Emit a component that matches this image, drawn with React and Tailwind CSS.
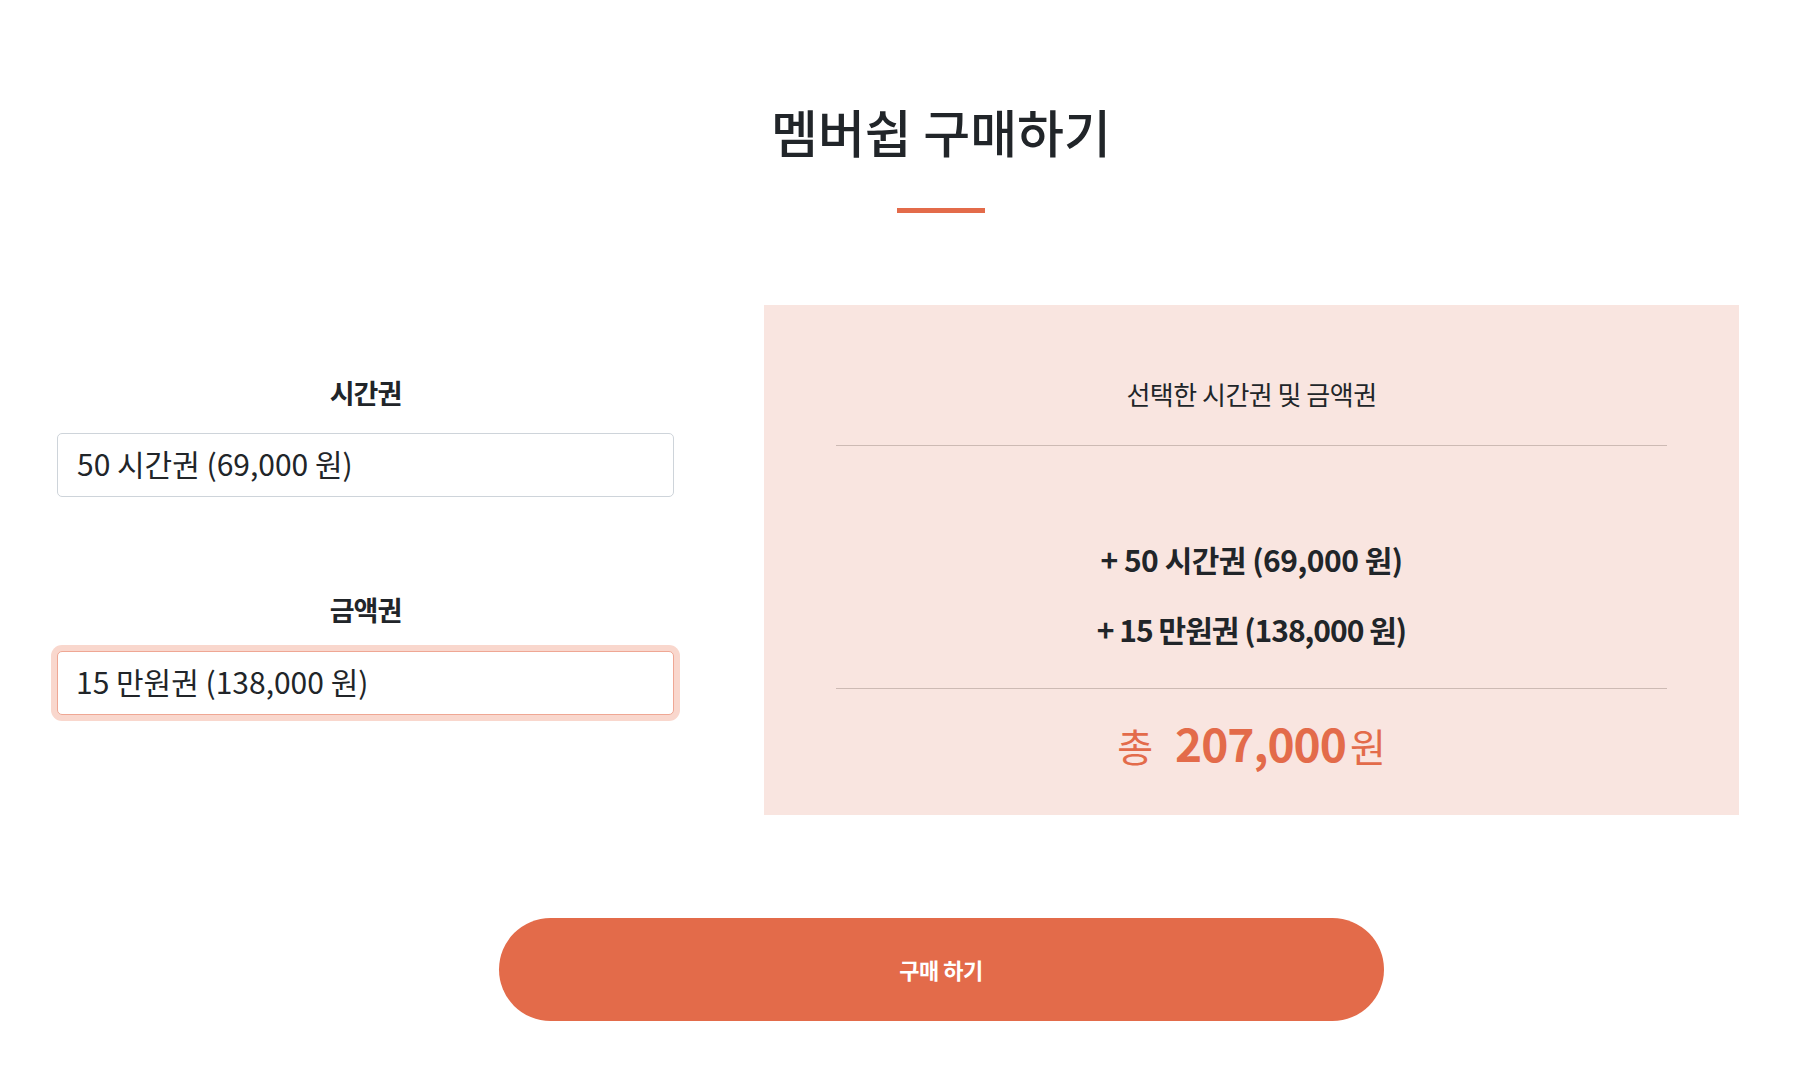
export default function App() {
  const font = { fontFamily: '"Noto Sans CJK KR", "Noto Sans", sans-serif' };
  return (
    <div className="min-h-screen w-full bg-white text-[#212529]" style={font}>
      <div className="flex flex-col items-center pl-[70px] pt-[100px]">
        <h1 className="text-[51px] leading-[62px] font-medium text-[#212529]">멤버쉽 구매하기</h1>
        <div className="mt-[46px] h-[5px] w-[88px] bg-[#E36B4A]" />
      </div>

      <div className="mt-[92px] flex items-start pl-[57px]">
        <div className="w-[617px] pt-[71px] flex flex-col">
          <label className="text-center text-[27px] leading-[34px] font-bold tracking-[-1px] text-[#212529]">시간권</label>
          <div className="mt-[23px] h-[64px] rounded-[5px] border border-[#ced4da] bg-white px-[19px] pb-[3px] flex items-center text-[30px] text-[#212529]">
            50 시간권 (69,000 원)
          </div>
          <label className="mt-[96px] text-center text-[27px] leading-[34px] font-bold tracking-[-1px] text-[#212529]">금액권</label>
          <div className="mt-[24px] h-[64px] rounded-[5px] border border-[#EFA794] bg-white px-[18px] pb-[3px] flex items-center text-[30px] text-[#212529] shadow-[0_0_0_6px_#F9D7CD]">
            15 만원권 (138,000 원)
          </div>
        </div>

        <div className="ml-[90px] w-[975px] bg-[#F9E5E0] px-[72px] pt-[72px] pb-[42px] flex flex-col">
          <div className="text-center text-[26px] leading-[34px] tracking-[-0.5px] text-[#212529]">선택한 시간권 및 금액권</div>
          <div className="mt-[34px] h-px bg-[#CDBAB4]" />
          <div className="mt-[93px] text-center text-[30px] leading-[40px] font-bold tracking-[-0.5px] text-[#212529]">+ 50 시간권 (69,000 원)</div>
          <div className="mt-[30px] text-center text-[30px] leading-[40px] font-bold tracking-[-1px] text-[#212529]">+ 15 만원권 (138,000 원)</div>
          <div className="mt-[39px] h-px bg-[#CDBAB4]" />
          <div className="mt-[25px] flex items-baseline justify-center text-[#E36B4A] leading-[56px]">
            <span className="text-[39px] mr-[22px]">총</span>
            <span className="text-[46px] font-bold tracking-[-1px]">207,000</span>
            <span className="text-[39px] ml-[4px]">원</span>
          </div>
        </div>
      </div>

      <div className="mt-[103px] flex justify-center pl-[70px]">
        <button className="h-[103px] w-[885px] rounded-full bg-[#E36B4A] text-white text-[22px] font-bold tracking-[-0.5px]">구매 하기</button>
      </div>
    </div>
  );
}
